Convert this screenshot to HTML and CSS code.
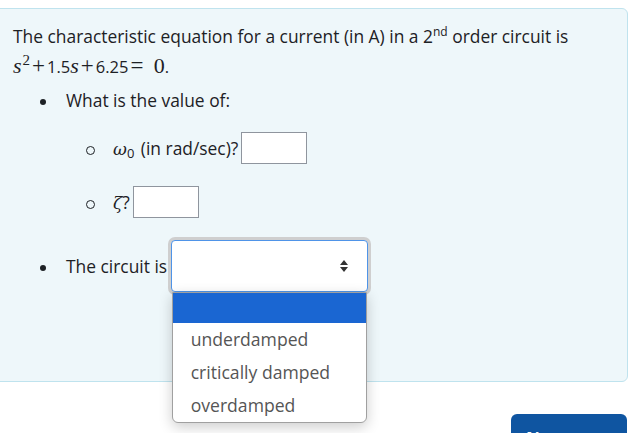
FILE: index.html
```
<html lang="en">
<head>
    <meta charset="UTF-8">
    <title>Question</title>
    <link rel="stylesheet" href="styles.css">
</head>
<body>
    <div class="que">
        <p class="qtext">The characteristic equation for a current (in A) in a 2<sup>nd</sup> order circuit is<br>
            <span class="math"><i>s</i><sup class="msup">2</sup><span class="op">+</span>1.5<i>s</i><span class="op">+</span>6.25<span class="op">=</span> <span class="mnum">0</span>.</span>
        </p>
        <ul class="parts">
            <li>What is the value of:
                <ul class="sub">
                    <li><span class="greek">ω</span><span class="sub0">0</span> (in rad/sec)?<input type="text" class="answer"></li>
                    <li><span class="greek">ζ</span>?<input type="text" class="answer"></li>
                </ul>
            </li>
            <li class="circuit">The circuit is
                <span class="select-wrap">
                    <span class="select">
                        <svg class="arrows" width="10" height="14" viewBox="0 0 10 14"><path d="M5 1 L9 6 H1 Z M5 13 L1 8 H9 Z" fill="#333"/></svg>
                    </span>
                    <span class="dropdown">
                        <span class="opt selected"></span>
                        <span class="opt">underdamped</span>
                        <span class="opt">critically damped</span>
                        <span class="opt">overdamped</span>
                    </span>
                </span>
            </li>
        </ul>
    </div>
    <div class="actions">
        <button class="next">Next page</button>
    </div>
</body>
</html>
```

FILE: styles.css
```
* {
    box-sizing: border-box;
}

body {
    margin: 0;
    background: #fff;
    font-family: 'Open Sans', 'Noto Sans', sans-serif;
    font-size: 17.4px;
    color: #1d2125;
}

.que {
    margin: 8px 7px 0 -10px;
    height: 374px;
    padding: 13px 20px 0 22px;
    background: #eef7fa;
    border: 1px solid #bfe3ee;
    border-radius: 6px;
}

.qtext {
    margin: 0;
    line-height: 29px;
}

.qtext sup {
    font-size: 12px;
    line-height: 0;
}

.math {
    font-size: 16.5px;
}

.math i {
    font-family: 'Liberation Serif', serif;
    font-size: 22px;
}

.math .msup {
    font-family: 'Liberation Serif', serif;
    font-size: 15px;
    vertical-align: 8px;
    margin-left: 1px;
}

.math .op {
    font-family: 'Liberation Serif', serif;
    font-size: 23px;
    margin: 0 2px;
}

.math .mnum {
    font-family: 'Liberation Serif', serif;
    font-size: 22px;
    margin-left: 4px;
}

.parts {
    list-style: none;
    margin: 7px 0 0;
    padding-left: 53px;
    line-height: 24px;
}

.parts > li::before {
    content: '';
    display: inline-block;
    width: 6px;
    height: 6px;
    margin: 0 20px 0 -26px;
    border-radius: 50%;
    background: #1d2125;
    vertical-align: middle;
}

.sub {
    list-style: none;
    padding-left: 45px;
    margin: 20px 0 0;
}

.sub li {
    margin-bottom: 22px;
    height: 32px;
    line-height: 32px;
}

.sub li::before {
    content: '';
    display: inline-block;
    width: 7px;
    height: 7px;
    margin: 0 18px 0 -25px;
    border: 1.5px solid #1d2125;
    border-radius: 50%;
    vertical-align: middle;
}

.greek {
    font-family: 'DejaVu Serif', serif;
    font-style: italic;
    font-size: 17px;
}

.sub0 {
    font-size: 13px;
    vertical-align: -3px;
    margin-right: 2px;
}

.answer {
    width: 66px;
    height: 32px;
    margin-left: 3px;
    vertical-align: top;
    border: 1px solid #8f959e;
    background: #fff;
}

.circuit {
    margin-top: 9px;
    height: 52px;
    line-height: 52px;
}

.select-wrap {
    position: relative;
    display: inline-block;
    vertical-align: top;
    margin-left: -1px;
}

.select {
    display: flex;
    align-items: center;
    justify-content: flex-end;
    width: 197px;
    height: 52px;
    padding-right: 18px;
    background: #fff;
    border: 1px solid #4f94e8;
    border-radius: 4px;
    box-shadow: 0 0 0 3px #cfcfcf;
}

.dropdown {
    position: absolute;
    top: 52px;
    left: 1px;
    width: 195px;
    display: flex;
    flex-direction: column;
    background: #fff;
    border: 1px solid #a0a0a0;
    border-radius: 0 0 6px 6px;
    box-shadow: 0 4px 14px rgba(0, 0, 0, 0.2);
    overflow: hidden;
    line-height: 33px;
    font-size: 17.6px;
    color: #555;
}

.opt {
    padding-left: 18px;
    height: 33px;
}

.opt.selected {
    background: #1a66d2;
    height: 30px;
}

.actions {
    display: flex;
    justify-content: flex-end;
    padding: 32px 8px 0;
}

.next {
    width: 116px;
    height: 40px;
    padding-top: 10px;
    border: none;
    border-radius: 6px;
    background: #0f55a1;
    color: #fff;
    font-family: 'Open Sans', sans-serif;
    font-size: 17px;
    font-weight: bold;
    line-height: 20px;
    vertical-align: top;
}
```
